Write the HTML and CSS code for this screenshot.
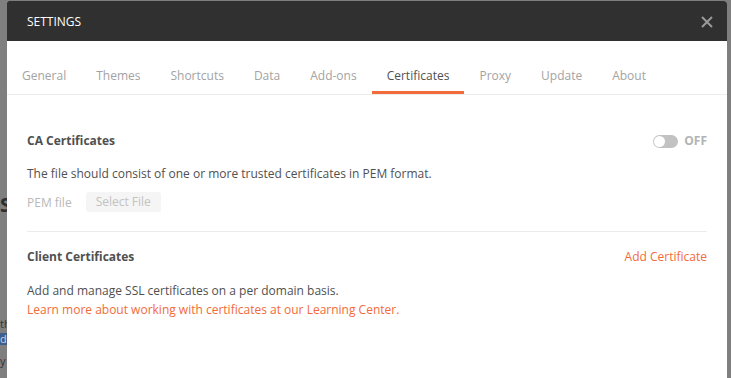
FILE: index.html
```html
<!DOCTYPE html>
<html>
<head>
<meta charset="utf-8">
<link rel="stylesheet" href="styles.css">
</head>
<body>
<div class="backdrop-left">
  <div class="bg-s">S</div>
  <div class="bg-th">th</div>
  <div class="bg-d">d:</div>
  <div class="bg-y">y</div>
</div>
<div class="modal">
  <div class="modal-header">
    <span class="modal-title">SETTINGS</span>
    <svg class="close" width="12" height="12" viewBox="0 0 12 12"><path d="M1 1L11 11M11 1L1 11" stroke="#9a9a9a" stroke-width="2" fill="none"/></svg>
  </div>
  <div class="tabs">
    <div class="tab">General</div>
    <div class="tab">Themes</div>
    <div class="tab">Shortcuts</div>
    <div class="tab">Data</div>
    <div class="tab">Add-ons</div>
    <div class="tab active">Certificates</div>
    <div class="tab">Proxy</div>
    <div class="tab">Update</div>
    <div class="tab">About</div>
  </div>
  <div class="content">
    <div class="row head-row">
      <span class="section-title">CA Certificates</span>
      <span class="toggle-wrap"><span class="toggle"><span class="knob"></span></span><span class="off">OFF</span></span>
    </div>
    <p class="desc first">The file should consist of one or more trusted certificates in PEM format.</p>
    <div class="pem-row">
      <span class="pem-label">PEM file</span>
      <span class="select-btn">Select File</span>
    </div>
    <div class="divider"></div>
    <div class="row client-row">
      <span class="section-title">Client Certificates</span>
      <span class="link">Add Certificate</span>
    </div>
    <p class="desc second">Add and manage SSL certificates on a per domain basis.</p>
    <p class="desc link-line">Learn more about working with certificates at our Learning Center.</p>
  </div>
</div>
</body>
</html>
```
FILE: styles.css
```css
html, body {
  margin: 0;
  padding: 0;
  height: 100%;
}
body {
  background: #7f7f7f;
  font-family: "Open Sans", "Liberation Sans", sans-serif;
  font-size: 12px;
  display: flex;
  align-items: flex-start;
  overflow: hidden;
}
.backdrop-left {
  width: 7px;
  flex: none;
  height: 378px;
  overflow: hidden;
  color: #333;
}
.bg-s { margin-top: 192px; font-size: 20px; font-weight: 700; line-height: 26px; color: #2e2e2e; }
.bg-th { margin-top: 100px; line-height: 12px; font-size: 11px; color: #333; }
.bg-d { margin-top: 3px; line-height: 12px; font-size: 11px; background: #3d5f8e; color: #c8d2e0; width: 16px; }
.bg-y { margin-top: 10px; line-height: 12px; font-size: 11px; color: #333; }

.modal {
  width: 720px;
  flex: none;
  margin-top: 1px;
  background: #fff;
  height: 377px;
  border-top-right-radius: 3px;
  border-top-left-radius: 2px;
  overflow: hidden;
}
.modal-header {
  height: 40px;
  background: #303030;
  display: flex;
  align-items: center;
  justify-content: space-between;
  padding: 0 14px 0 20px;
}
.modal-title {
  color: #fff;
  font-size: 12px;
}
.close { display: block; margin-top: 1px; }

.tabs {
  display: flex;
  margin-top: 25px;
  border-bottom: 1px solid #ececec;
}
.tab {
  padding: 0 15px 5px;
  line-height: 20px;
  color: #a3a3a3;
  border-bottom: 3px solid transparent;
}
.tab.active {
  color: #505050;
  border-bottom-color: #f26b3a;
}

.content {
  padding: 36px 20px 0;
}
.row {
  display: flex;
  justify-content: space-between;
  align-items: center;
  line-height: 20px;
}
.section-title {
  font-weight: 700;
  color: #505050;
}
.toggle-wrap {
  display: flex;
  align-items: center;
  gap: 6px;
}
.toggle {
  width: 25px;
  height: 13px;
  border-radius: 7px;
  background: #c2c2c2;
  display: flex;
  align-items: center;
  padding: 0 1px;
  box-sizing: border-box;
}
.knob {
  width: 11px;
  height: 11px;
  border-radius: 50%;
  background: #fff;
}
.off {
  font-weight: 700;
  color: #b3b3b3;
  font-size: 12px;
}
.desc {
  margin: 0;
  color: #505050;
  line-height: 20px;
}
.desc.first { margin-top: 13px; }
.pem-row {
  display: flex;
  align-items: center;
  gap: 14px;
  margin-top: 8px;
}
.pem-label { color: #b8b8b8; }
.select-btn {
  background: #f5f5f5;
  color: #c2c2c2;
  border-radius: 3px;
  padding: 0 10px;
  line-height: 20px;
  height: 20px;
}
.divider {
  height: 1px;
  background: #ececec;
  margin-top: 19px;
}
.client-row { margin-top: 15px; }
.link { color: #f26b3a; }
.desc.second { margin-top: 14px; line-height: 19px; }
.desc.link-line { color: #f26b3a; line-height: 19px; }
```
